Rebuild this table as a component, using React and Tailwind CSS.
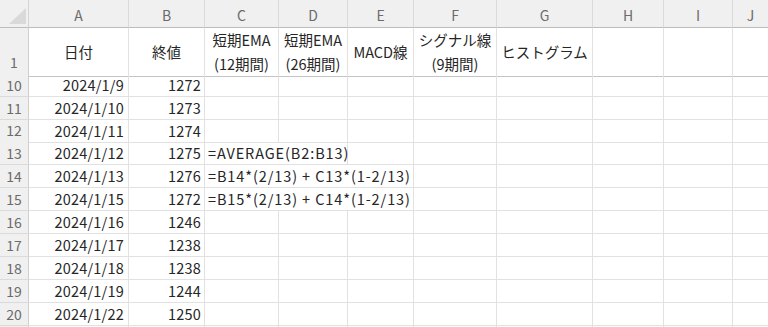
import React from "react";

const COLS = "grid grid-cols-[29px_100px_76px_74px_69px_66px_83px_96px_71px_69px_1fr]";
const FONT = { fontFamily: '"Noto Sans CJK JP", "Noto Sans", sans-serif' };

const data = [
  [10, "2024/1/9", "1272", "", 23],
  [11, "2024/1/10", "1273", "", 23],
  [12, "2024/1/11", "1274", "", 22],
  [13, "2024/1/12", "1275", "=AVERAGE(B2:B13)", 23],
  [14, "2024/1/13", "1276", "=B14*(2/13) + C13*(1-2/13)", 23],
  [15, "2024/1/15", "1272", "=B15*(2/13) + C14*(1-2/13)", 23],
  [16, "2024/1/16", "1246", "", 23],
  [17, "2024/1/17", "1238", "", 23],
  [18, "2024/1/18", "1238", "", 23],
  [19, "2024/1/19", "1244", "", 23],
  [20, "2024/1/22", "1250", "", 23],
  [null, "", "", "", 23],
];

function ColHeader({ label, last }) {
  return (
    <div
      className={
        "flex items-center justify-center pt-[3px] text-[14px] text-[#6b6b6b] bg-[#f0f0f0] border-b border-[#bdbdbd] " +
        (last ? "" : "border-r border-r-[#dadada]")
      }
    >
      {label}
    </div>
  );
}

function HeadCell({ lines, last }) {
  return (
    <div
      className={
        "flex flex-col items-center justify-center text-[14.5px] leading-[24px] text-[#262626] bg-white border-b border-[#c4c4c4] whitespace-nowrap " +
        (last ? "" : "border-r border-r-[#e1e1e1]")
      }
    >
      {lines.map((l, i) => (
        <span key={i}>{l}</span>
      ))}
    </div>
  );
}

export default function App() {
  const letters = ["A", "B", "C", "D", "E", "F", "G", "H", "I", "J"];
  return (
    <div className="w-[768px] h-[327px] overflow-hidden bg-white" style={FONT}>
      {/* column header row */}
      <div className={COLS + " h-[28px]"}>
        <div className="relative bg-[#f0f0f0] border-b border-r border-[#bdbdbd] border-r-[#d4d4d4]">
          <svg className="absolute left-[9px] top-[8px]" width="17" height="16" viewBox="0 0 17 16">
            <polygon points="17,0 17,16 0,16" fill="#d9d9d9" />
          </svg>
        </div>
        {letters.map((l, i) => (
          <ColHeader key={l} label={l} last={i === letters.length - 1} />
        ))}
      </div>

      {/* row 1 (frozen) */}
      <div className={COLS + " h-[46px]"}>
        <div className="flex items-end justify-center pb-[3px] text-[14px] text-[#6b6b6b] bg-[#f0f0f0] border-r border-b border-[#c4c4c4] border-r-[#cfcfcf]">
          1
        </div>
        <HeadCell lines={["日付"]} />
        <HeadCell lines={["終値"]} />
        <HeadCell lines={["短期EMA", "(12期間)"]} />
        <HeadCell lines={["短期EMA", "(26期間)"]} />
        <HeadCell lines={["MACD線"]} />
        <HeadCell lines={["シグナル線", "(9期間)"]} />
        <HeadCell lines={["ヒストグラム"]} />
        <HeadCell lines={[""]} />
        <HeadCell lines={[""]} />
        <HeadCell lines={[""]} last />
      </div>

      {data.map(([n, date, val, formula, h], idx) => {
        const hasF = formula !== "";
        const long = formula.length > 18;
        return (
          <div key={idx} className={COLS + (h === 22 ? " h-[22px]" : " h-[23px]")}>
            <div className="flex items-center justify-center text-[14px] text-[#6b6b6b] bg-[#f0f0f0] border-r border-b border-[#dadada] border-r-[#cfcfcf]">
              {n}
            </div>
            <div className="flex items-center justify-end pr-[4px] text-[14.5px] tracking-[0.2px] text-[#262626] border-r border-b border-[#e1e1e1]">
              {date}
            </div>
            <div className="flex items-center justify-end pr-[3px] text-[14.5px] tracking-[0.2px] text-[#262626] border-r border-b border-[#e1e1e1]">
              {val}
            </div>
            <div
              className={
                "relative z-10 flex items-center pl-[3px] text-[14.5px] tracking-[0.9px] text-[#262626] whitespace-nowrap border-b border-[#e1e1e1] " +
                (hasF ? "" : "border-r")
              }
            >
              {formula}
            </div>
            <div className={"border-b border-[#e1e1e1] " + (long ? "" : "border-r")} />
            <div className="border-r border-b border-[#e1e1e1]" />
            <div className="border-r border-b border-[#e1e1e1]" />
            <div className="border-r border-b border-[#e1e1e1]" />
            <div className="border-r border-b border-[#e1e1e1]" />
            <div className="border-r border-b border-[#e1e1e1]" />
            <div className="border-b border-[#e1e1e1]" />
          </div>
        );
      })}
    </div>
  );
}
